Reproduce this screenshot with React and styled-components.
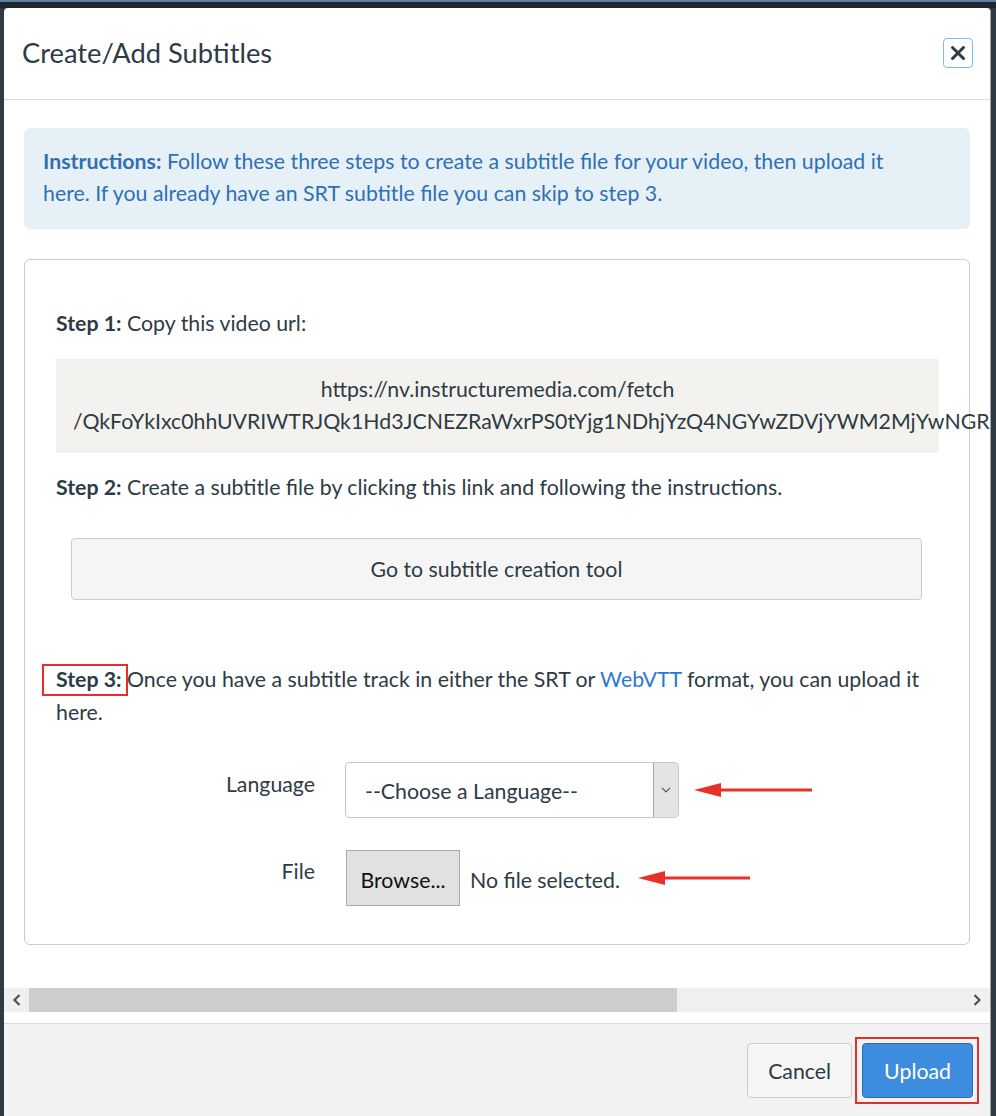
import React from 'react';
import styled, { createGlobalStyle } from 'styled-components';

const GlobalStyles = createGlobalStyle`
  html, body {
    margin: 0;
    padding: 0;
    background: #2f3a44;
    font-family: Lato, "Noto Sans", "Liberation Sans", sans-serif;
    color: #2d3b45;
  }
  * { box-sizing: border-box; }
`;

const TEXT = '21.3px';

const Page = styled.div`
  height: 1116px;
  overflow: hidden;
  border-top: 2px solid #5f7ea0;
  background: #2f3a44;
`;

const TopShade = styled.div`
  height: 6px;
  background: #1d262d;
`;

const Dialog = styled.div`
  margin-left: 4px;
  width: 987px;
  height: 1120px;
  background: #fff;
  border-radius: 4px 4px 0 0;
  border-right: 1px solid #9aa2a8;
  display: flex;
  flex-direction: column;
  overflow: hidden;
`;

const Header = styled.div`
  height: 92px;
  flex: none;
  display: flex;
  align-items: center;
  justify-content: space-between;
  padding: 0 17px 2px 18px;
  border-bottom: 1px solid #dadada;
`;

const Title = styled.h2`
  margin: 0;
  font-size: 27.3px;
  font-weight: 400;
  color: #2d3b45;
`;

const CloseButton = styled.button`
  width: 30px;
  height: 30px;
  padding: 0;
  display: flex;
  align-items: center;
  justify-content: center;
  background: #fff;
  border: 1.5px solid #7db9f2;
  border-radius: 4px;
  cursor: pointer;
`;

const Body = styled.div`
  flex: none;
  overflow: hidden;
  padding: 28px 20px 43px 20px;
`;

const Alert = styled.div`
  background: #e6f0f7;
  border-radius: 6px;
  padding: 17px 70px 20px 19px;
  font-size: ${TEXT};
  line-height: 32px;
  color: #2f70b4;
`;

const Panel = styled.div`
  margin-top: 30px;
  border: 1px solid #c7cdd1;
  border-radius: 6px;
  padding: 47px 30px 38px 31px;
`;

const StepText = styled.p`
  margin: ${(p) => p.$top || 0}px 0 0 0;
  font-size: ${TEXT};
  line-height: 33px;
  color: #2d3b45;
`;

const Highlight = styled.b`
  position: relative;
  &::after {
    content: '';
    position: absolute;
    left: -14px;
    right: -6px;
    top: -2px;
    bottom: -4px;
    border: 2px solid #e2312c;
  }
`;

const UrlBox = styled.div`
  margin-top: 19px;
  background: #f3f2ee;
  padding: 14px 17px 16px 17px;
  font-size: ${TEXT};
  line-height: 32px;
  text-align: center;
  color: #2d3b45;
`;

const UrlLine = styled.div`
  white-space: nowrap;
`;

const ToolButton = styled.button`
  display: block;
  width: calc(100% - 32px);
  height: 62px;
  margin: 34px 17px 0 15px;
  background: #f5f5f5;
  border: 1px solid #c7cdd1;
  border-radius: 4px;
  font-family: inherit;
  font-size: ${TEXT};
  color: #2d3b45;
  cursor: pointer;
`;

const Link = styled.a`
  color: #2b7ad0;
  text-decoration: none;
`;

const Form = styled.div`
  margin-top: 33px;
  display: flex;
  flex-direction: column;
  gap: 32px;
`;

const FormRow = styled.div`
  display: flex;
  align-items: flex-start;
`;

const Label = styled.div`
  width: 259px;
  flex: none;
  text-align: right;
  padding-top: ${(p) => p.$pad}px;
  font-size: ${TEXT};
  line-height: 33px;
  color: #2d3b45;
`;

const Control = styled.div`
  margin-left: 30px;
  display: flex;
  align-items: center;
`;

const Select = styled.div`
  width: 334px;
  height: 56px;
  display: flex;
  border: 1px solid #c8c8c8;
  border-radius: 4px;
  overflow: hidden;
  background: #fff;
`;

const SelectValue = styled.div`
  flex: 1;
  display: flex;
  align-items: center;
  padding: 2px 0 0 19px;
  font-size: ${TEXT};
  color: #2d3b45;
`;

const SelectArrow = styled.div`
  width: 25px;
  flex: none;
  display: flex;
  align-items: center;
  justify-content: center;
  background: #e4e4e4;
  border-left: 1px solid #a9a9a9;
`;

const Browse = styled.button`
  width: 114px;
  height: 56px;
  margin-left: 1px;
  background: #e1e1e1;
  border: 1px solid #a9a9a9;
  border-radius: 0;
  font-family: inherit;
  font-size: ${TEXT};
  color: #111;
  padding: 4px 0 0 0;
`;

const FileName = styled.span`
  margin-left: 10px;
  padding-top: 4px;
  font-size: ${TEXT};
  color: #2d3b45;
`;

const Arrow = styled.svg`
  margin-left: ${(p) => p.$gap}px;
  flex: none;
`;

const ScrollBar = styled.div`
  height: 24px;
  flex: none;
  display: flex;
  align-items: stretch;
  background: #f0f0f0;
`;

const ScrollButton = styled.div`
  width: ${(p) => p.$w}px;
  flex: none;
  display: flex;
  align-items: center;
  justify-content: center;
`;

const ScrollThumb = styled.div`
  width: 648px;
  background: #cdcdcd;
`;

const ScrollRest = styled.div`
  flex: 1;
`;

const Footer = styled.div`
  margin-top: 11px;
  flex: 1;
  background: #f2f2f2;
  border-top: 1px solid #d9d9d9;
  display: flex;
  justify-content: flex-end;
  align-items: flex-start;
  gap: 10px;
  padding: 19px 17px 0 0;
`;

const FooterButton = styled.button`
  position: relative;
  height: 55px;
  padding: 0 ${(p) => (p.$primary ? 21 : 20)}px;
  border-radius: 4px;
  border: 1px solid ${(p) => (p.$primary ? '#2a6cb3' : '#c7cdd1')};
  background: ${(p) => (p.$primary ? '#3d8ce0' : '#f5f5f5')};
  color: ${(p) => (p.$primary ? '#fff' : '#2d3b45')};
  font-family: inherit;
  font-size: ${TEXT};
  cursor: pointer;
  ${(p) =>
    p.$marked &&
    `
    &::after {
      content: '';
      position: absolute;
      left: -8px;
      right: -7px;
      top: -7px;
      bottom: -7px;
      border: 2px solid #e2312c;
    }
  `}
`;

const RedArrow = ({ width, gap }) => (
  <Arrow $gap={gap} width={width} height="18" viewBox={`0 0 ${width} 18`}>
    <line x1="24" y1="9" x2={width} y2="9" stroke="#e5332a" strokeWidth="3" />
    <polygon points="0,9 27,2 27,16" fill="#e5332a" />
  </Arrow>
);

const urlTail =
  '/QkFoYkIxc0hhUVRIWTRJQk1Hd3JCNEZRaWxrPS0tYjg1NDhjYzQ4NGYwZDVjYWM2MjYwNGRmZDk2ZDU2MTI1ZjUxMTg3';

function App() {
  return (
    <>
      <GlobalStyles />
      <Page>
        <TopShade />
        <Dialog>
          <Header>
            <Title>Create/Add Subtitles</Title>
            <CloseButton aria-label="Close">
              <svg width="16" height="16" viewBox="0 0 16 16">
                <path d="M2.5 2.5 L13.5 13.5 M13.5 2.5 L2.5 13.5" stroke="#2d3b45" strokeWidth="3" strokeLinecap="round" />
              </svg>
            </CloseButton>
          </Header>

          <Body>
            <Alert>
              <b>Instructions:</b> Follow these three steps to create a subtitle file for your video, then upload it
              here. If you already have an SRT subtitle file you can skip to step 3.
            </Alert>

            <Panel>
              <StepText>
                <b>Step 1:</b> Copy this video url:
              </StepText>
              <UrlBox>
                <UrlLine>https://nv.instructuremedia.com/fetch</UrlLine>
                <UrlLine>{urlTail}</UrlLine>
              </UrlBox>

              <StepText $top={18}>
                <b>Step 2:</b> Create a subtitle file by clicking this link and following the instructions.
              </StepText>
              <ToolButton>Go to subtitle creation tool</ToolButton>

              <StepText $top={63}>
                <Highlight>Step 3:</Highlight> Once you have a subtitle track in either the SRT or{' '}
                <Link href="#">WebVTT</Link> format, you can upload it here.
              </StepText>

              <Form>
                <FormRow>
                  <Label $pad={6}>Language</Label>
                  <Control>
                    <Select>
                      <SelectValue>--Choose a Language--</SelectValue>
                      <SelectArrow>
                        <svg width="10" height="6" viewBox="0 0 10 6">
                          <polyline points="1,0.8 5,5 9,0.8" fill="none" stroke="#555" strokeWidth="1.2" />
                        </svg>
                      </SelectArrow>
                    </Select>
                    <RedArrow width={118} gap={15} />
                  </Control>
                </FormRow>
                <FormRow>
                  <Label $pad={5}>File</Label>
                  <Control>
                    <Browse>Browse...</Browse>
                    <FileName>No file selected.</FileName>
                    <RedArrow width={112} gap={18} />
                  </Control>
                </FormRow>
              </Form>
            </Panel>
          </Body>

          <ScrollBar>
            <ScrollButton $w={25}>
              <svg width="8" height="12" viewBox="0 0 8 12">
                <polyline points="6.5,1 1.5,6 6.5,11" fill="none" stroke="#505050" strokeWidth="2.2" />
              </svg>
            </ScrollButton>
            <ScrollThumb />
            <ScrollRest />
            <ScrollButton $w={26}>
              <svg width="8" height="12" viewBox="0 0 8 12">
                <polyline points="1.5,1 6.5,6 1.5,11" fill="none" stroke="#505050" strokeWidth="2.2" />
              </svg>
            </ScrollButton>
          </ScrollBar>

          <Footer>
            <FooterButton>Cancel</FooterButton>
            <FooterButton $primary $marked>Upload</FooterButton>
          </Footer>
        </Dialog>
      </Page>
    </>
  );
}

export default App;
